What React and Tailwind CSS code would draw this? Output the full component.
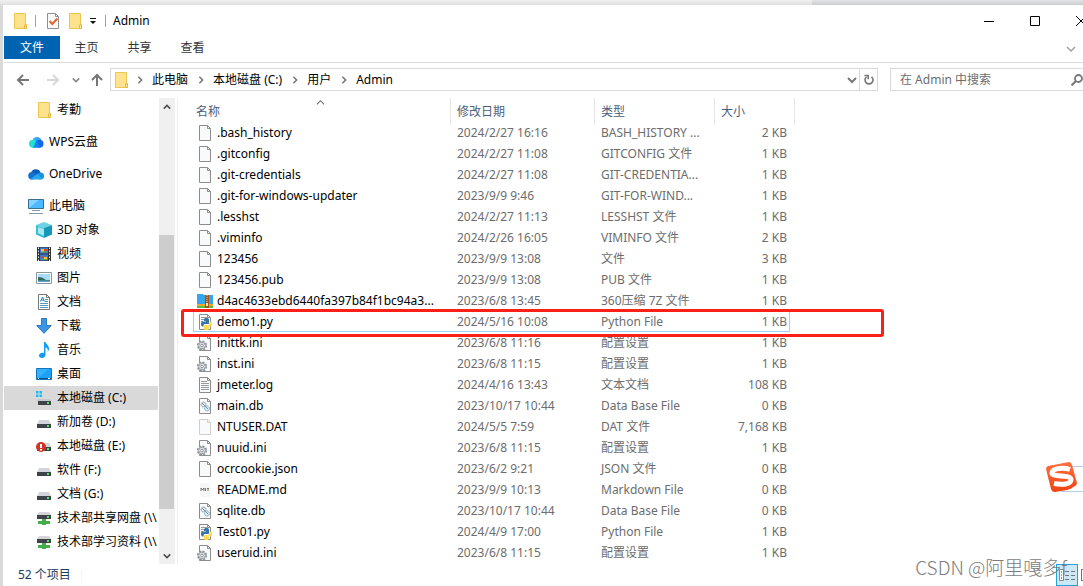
const files = [
  { name: '.bash_history', date: '2024/2/27 16:16', type: 'BASH_HISTORY ...', size: '2 KB', icon: 'blank' },
  { name: '.gitconfig', date: '2024/2/27 11:08', type: 'GITCONFIG 文件', size: '1 KB', icon: 'blank' },
  { name: '.git-credentials', date: '2024/2/27 11:08', type: 'GIT-CREDENTIA...', size: '1 KB', icon: 'blank' },
  { name: '.git-for-windows-updater', date: '2023/9/9 9:46', type: 'GIT-FOR-WIND...', size: '1 KB', icon: 'blank' },
  { name: '.lesshst', date: '2024/2/27 11:13', type: 'LESSHST 文件', size: '1 KB', icon: 'blank' },
  { name: '.viminfo', date: '2024/2/26 16:05', type: 'VIMINFO 文件', size: '2 KB', icon: 'blank' },
  { name: '123456', date: '2023/9/9 13:08', type: '文件', size: '3 KB', icon: 'blank' },
  { name: '123456.pub', date: '2023/9/9 13:08', type: 'PUB 文件', size: '1 KB', icon: 'blank' },
  { name: 'd4ac4633ebd6440fa397b84f1bc94a3...', date: '2023/6/8 13:45', type: '360压缩 7Z 文件', size: '1 KB', icon: 'zip' },
  { name: 'demo1.py', date: '2024/5/16 10:08', type: 'Python File', size: '1 KB', icon: 'python', selected: true },
  { name: 'inittk.ini', date: '2023/6/8 11:16', type: '配置设置', size: '1 KB', icon: 'ini' },
  { name: 'inst.ini', date: '2023/6/8 11:15', type: '配置设置', size: '1 KB', icon: 'ini' },
  { name: 'jmeter.log', date: '2024/4/16 13:43', type: '文本文档', size: '108 KB', icon: 'text' },
  { name: 'main.db', date: '2023/10/17 10:44', type: 'Data Base File', size: '0 KB', icon: 'db' },
  { name: 'NTUSER.DAT', date: '2024/5/5 7:59', type: 'DAT 文件', size: '7,168 KB', icon: 'faded' },
  { name: 'nuuid.ini', date: '2023/6/8 11:15', type: '配置设置', size: '1 KB', icon: 'ini' },
  { name: 'ocrcookie.json', date: '2023/6/2 9:21', type: 'JSON 文件', size: '0 KB', icon: 'blank' },
  { name: 'README.md', date: '2023/9/9 10:13', type: 'Markdown File', size: '0 KB', icon: 'md' },
  { name: 'sqlite.db', date: '2023/10/17 10:44', type: 'Data Base File', size: '0 KB', icon: 'db' },
  { name: 'Test01.py', date: '2024/4/9 17:00', type: 'Python File', size: '1 KB', icon: 'python' },
  { name: 'useruid.ini', date: '2023/6/8 11:15', type: '配置设置', size: '1 KB', icon: 'ini' },
]

const roots = [
  { label: 'WPS云盘', icon: WpsIcon },
  { label: 'OneDrive', icon: OneDriveIcon },
  { label: '此电脑', icon: PcIcon },
]

const children = [
  { label: '3D 对象', icon: CubeIcon },
  { label: '视频', icon: VideoIcon },
  { label: '图片', icon: PictureIcon },
  { label: '文档', icon: DocsIcon },
  { label: '下载', icon: DownloadIcon },
  { label: '音乐', icon: MusicIcon },
  { label: '桌面', icon: DesktopIcon },
  { label: '本地磁盘 (C:)', icon: SystemDriveIcon, active: true },
  { label: '新加卷 (D:)', icon: DriveIcon },
  { label: '本地磁盘 (E:)', icon: ErrorDriveIcon },
  { label: '软件 (F:)', icon: DriveIcon },
  { label: '文档 (G:)', icon: DriveIcon },
  { label: '技术部共享网盘 (\\\\', icon: NetDriveIcon },
  { label: '技术部学习资料 (\\\\', icon: NetDriveIcon },
]

const crumbs = ['此电脑', '本地磁盘 (C:)', '用户', 'Admin']

function Icon({ children }) {
  return (
    <svg width="16" height="16" viewBox="0 0 16 16" fill="none" className="shrink-0" aria-hidden="true">
      {children}
    </svg>
  )
}

function Chevron({ dir = 'down', color = '#6b6b6b', size = 8, stroke = 2 }) {
  const d = { down: 'M1 3l4 4 4-4', up: 'M1 7l4-4 4 4', right: 'M3 1l4 4-4 4' }[dir]
  return (
    <svg width={size} height={size} viewBox="0 0 10 10" fill="none" className="shrink-0" aria-hidden="true">
      <path d={d} stroke={color} strokeWidth={stroke} />
    </svg>
  )
}

function FolderIcon() {
  return (
    <Icon>
      <path d="M2.5.5h11v11h1v4h-12z" fill="#ffe28c" stroke="#ecc452" />
      <path d="M12.5 15.5v-3.5h2v3.5z" fill="#ffe9a8" stroke="#e5b93c" />
    </Icon>
  )
}

function PropsIcon() {
  return (
    <Icon>
      <path d="M2.5.5h8l3 3v12h-11z" fill="#f8f9fb" stroke="#8f8f8f" />
      <path d="M10.5.5v3h3" stroke="#8f8f8f" />
      <path d="M4.5 8l2.8 3 5-5.5" stroke="#e8632c" strokeWidth="2" />
    </Icon>
  )
}

function WpsIcon() {
  return (
    <Icon>
      <circle cx="9" cy="7.5" r="4.5" fill="#35a8f5" />
      <circle cx="5" cy="9.8" r="4" fill="#25dfd0" />
      <circle cx="11.5" cy="9.8" r="4" fill="#1268ef" />
      <path d="M5 13.8L9 6l3 7.8z" fill="#1583f0" />
    </Icon>
  )
}

function OneDriveIcon() {
  return (
    <Icon>
      <path d="M3 7a5 5 0 0 1 9.5-.6L13 10H2z" fill="#0a5cb8" />
      <circle cx="4" cy="9.8" r="3.8" fill="#1173cf" />
      <circle cx="12.5" cy="10" r="3.5" fill="#1a8fe0" />
      <path d="M2 13.4L9.5 7.6l5 5.2-2 .8H4z" fill="#29a5ea" />
    </Icon>
  )
}

function PcIcon() {
  return (
    <Icon>
      <path d="M.5 1.5h15v9H.5z" fill="#4bb8ff" stroke="#37718f" />
      <path d="M1 10V2h10z" fill="#86d1ff" />
      <path d="M4 12.5h8M1 15.5h14" stroke="#8797a3" />
    </Icon>
  )
}

function CubeIcon() {
  return (
    <Icon>
      <path d="M0 3l8-3 8 3-8 3z" fill="#6cd3e2" />
      <path d="M0 3l8 3v10l-8-3.5z" fill="#35bed4" />
      <path d="M16 3L8 6v10l8-3.5z" fill="#1597ba" />
      <path d="M2 5l6 2v7l-6-3z" fill="#a8e8f0" />
    </Icon>
  )
}

function VideoIcon() {
  return (
    <Icon>
      <path d="M1 1h14v14H1z" fill="#333" />
      <path d="M4 1.5h8v6H4z" fill="#3977d5" />
      <path d="M4 8.5h8v6H4z" fill="#3977d5" />
      <path d="M5 3h3v3H5zM8 11h3v2H8z" fill="#f1c334" />
      <path d="M8 3h3v2H8zM5 10h2v2H5z" fill="#cf4730" />
      <path d="M5 6h6M5 13.5h6" stroke="#63a547" />
      <path d="M2.5 1.5v14M13.5 1.5v14" stroke="#eee" strokeDasharray="1.5 1.5" />
    </Icon>
  )
}

function PictureIcon() {
  return (
    <Icon>
      <path d="M.5 2.5h15v11H.5z" fill="#fff" stroke="#8c969c" />
      <path d="M2 4h12v8H2z" fill="#a9dcf8" />
      <path d="M2 7l4 .5 4 2.5h4v2H2z" fill="#2e6b58" />
      <path d="M2 10.5h12V12H2z" fill="#5da3cc" />
    </Icon>
  )
}

function DocsIcon() {
  return (
    <Icon>
      <path d="M2.5.5h8l3 3v12h-11z" fill="#fff" stroke="#777" />
      <path d="M10.5.5v3h3" stroke="#777" />
      <path d="M4.5 7.5L6.5 3l2 4.5M5.2 6h2.6" stroke="#1e7fc4" />
      <path d="M9 5.5h3M9 7.5h3M4 9.5h8M4 11.5h8M4 13.5h8" stroke="#5796b9" />
    </Icon>
  )
}

function DownloadIcon() {
  return (
    <Icon>
      <path d="M5.5.5h5v7h4.8L8 15.3.7 7.5h4.8z" fill="#3d94e3" stroke="#2878c4" />
    </Icon>
  )
}

function MusicIcon() {
  return (
    <Icon>
      <path d="M8 0h1.5c.3 2 3.5 3.4 3.5 6.5 0 1.5-.6 2.5-1.3 3.3.4-2.5-.4-3.8-2.2-4.5V13c0 1.6-1.6 3-3.5 3S3 15 3 13.5s1.5-2.8 3.5-2.8c.6 0 1.1.1 1.5.3z" fill="#159bf3" />
    </Icon>
  )
}

function DesktopIcon() {
  return (
    <Icon>
      <path d="M.5 2.5h15v11H.5z" fill="#1ba1f8" stroke="#1577bb" />
      <path d="M1 13V3h12z" fill="#35b0ff" />
      <path d="M1 12.5h14" stroke="#0d4f87" />
      <path d="M2 12.5h1M12 12.5h2" stroke="#fff" />
    </Icon>
  )
}

function DriveShape({ y = 0 }) {
  return (
    <>
      <path d={`M3 ${5 + y}h10l2 4H1z`} fill="#d3d5d8" />
      <path d={`M1 ${9 + y}h14v4H1z`} fill="#3e4347" />
      <path d={`M11 ${11 + y}h2`} stroke="#52e35c" strokeWidth="2" />
    </>
  )
}

function DriveIcon() {
  return <Icon><DriveShape y={1} /></Icon>
}

function SystemDriveIcon() {
  return (
    <Icon>
      <path d="M2 9h12l1 3H1z" fill="#c5c8ca" />
      <path d="M2 11h13v4H2z" fill="#3e4347" />
      <path d="M11 13h2" stroke="#52e35c" strokeWidth="2" />
      <path d="M0 1h2.5v2.500H0zM3.500 1H6v2.500H3.500zM0 4.500h2.500V7H0zM3.500 4.500H6V7H3.500z" fill="#18bdf0" />
    </Icon>
  )
}

function ErrorDriveIcon() {
  return (
    <Icon>
      <DriveShape />
      <circle cx="5" cy="9" r="5" fill="#cf3526" />
      <path d="M5 6v4M5 11v1.5" stroke="#fff" strokeWidth="2" />
    </Icon>
  )
}

function NetDriveIcon() {
  return (
    <Icon>
      <path d="M3 2h10l2 3H1z" fill="#d3d5d8" />
      <path d="M1 5h14v4H1z" fill="#3e4347" />
      <path d="M11 7h2" stroke="#52e35c" strokeWidth="2" />
      <path d="M6 9h4v2h4v3h-4v1H6v-1H2v-3h4z" fill="#43ae4a" />
    </Icon>
  )
}

function Page({ stroke = '#8d8d8d', fill = '#f9fafb' }) {
  return (
    <>
      <path d="M2.5.5h8l3 3v12h-11z" fill={fill} stroke={stroke} />
      <path d="M10.5.5v3h3" stroke={stroke} />
    </>
  )
}

function FileIcon({ kind }) {
  if (kind === 'zip') {
    return (
      <Icon>
        <path d="M0 1h6l1 1h9v13H0z" fill="#36a6ee" />
        <path d="M0 11h16v2H0z" fill="#f2a52b" />
        <path d="M0 13h16v2H0z" fill="#58b947" />
        <path d="M8 2h4v13H8z" fill="#a6521c" />
        <path d="M10 2v8" stroke="#f6d27a" strokeDasharray="1 1" />
        <path d="M9 10h2v3H9z" fill="#ffe79b" />
      </Icon>
    )
  }
  if (kind === 'md') {
    return (
      <Icon>
        <path d="M3 1h8l3 3v11H3z" fill="#f6f6f6" />
        <path d="M4 9V6l1.500 2L7 6v3M8.500 6v3M10 6.500h2M11 6v3" stroke="#777" />
      </Icon>
    )
  }
  return (
    <Icon>
      <Page stroke={kind === 'faded' ? '#cfcfcf' : '#8d8d8d'} />
      {kind === 'text' && <path d="M4 4.500h6M4 6.500h8M4 8.500h8M4 10.500h8M4 12.500h8" stroke="#999" />}
      {kind === 'ini' && (
        <>
          <circle cx="5" cy="10.5" r="4.3" stroke="#8b9298" strokeWidth="1.6" strokeDasharray="2 1.37" fill="#d5d9dc" />
          <circle cx="5" cy="10.5" r="3.3" fill="#dfe3e5" stroke="#9aa1a6" />
          <circle cx="5" cy="10.5" r="1.3" fill="#fff" stroke="#8b9298" />
        </>
      )}
      {kind === 'db' && (
        <>
          <circle cx="6.5" cy="6.5" r="2.500" fill="#dfe7ec" stroke="#7d929f" strokeDasharray="1.5 .7" />
          <circle cx="10" cy="10.5" r="2.500" fill="#d4ebf7" stroke="#6ba4c5" strokeDasharray="1.5 .7" />
          <path d="M5 5l6 6" stroke="#7d929f" />
        </>
      )}
      {kind === 'python' && (
        <>
          <path d="M4 3.500h6M4 5.500h3M4 7.500h2M4 9.500h1" stroke="#999" />
          <path d="M7 5.500C7 4.500 8 4 9.500 4S12 4.500 12 5.500V9c0 .8-.5 1-1 1H8c-1 0-1.500.6-1.500 1.500v1H5.500C4.500 12.500 4 11.500 4 10s.5-2.500 1.500-2.500H9V7H7z" fill="#3775a9" />
          <path d="M12.500 7.500h1c1 0 1.500 1 1.500 2.500s-.5 2.500-1.500 2.500H10v.5h2v1.500c0 1-1 1.500-2.500 1.500S7 15.500 7 14.500V12c0-.8.5-1 1-1h3c1 0 1.500-.6 1.500-1.500z" fill="#ffdb4d" />
        </>
      )}
    </Icon>
  )
}

function NavArrow({ label, d, color }) {
  return (
    <button aria-label={label}>
      <svg width="14" height="14" viewBox="0 0 14 14" fill="none" aria-hidden="true">
        <path d={d} stroke={color} strokeWidth="2" />
      </svg>
    </button>
  )
}

function TitleBar() {
  return (
    <header className="flex h-[31px] items-center pl-2">
      <FolderIcon />
      <div className="ml-[7px] mr-[9px] h-3 w-px bg-gray-400" />
      <button aria-label="属性"><PropsIcon /></button>
      <button aria-label="新建文件夹" className="ml-[6px]"><FolderIcon /></button>
      <button aria-label="自定义快速访问工具栏" className="ml-[6px]">
        <svg width="8" height="8" viewBox="0 0 8 8" aria-hidden="true">
          <path d="M1 1h6v1H1zM1 4h6L4 7z" fill="#111" />
        </svg>
      </button>
      <div className="ml-2 mr-[7px] h-3 w-px bg-gray-400" />
      <h1>Admin</h1>
      <div className="ml-auto flex h-full">
        <button aria-label="最小化" className="flex w-[46px] items-center justify-center">
          <svg width="10" height="10"><path d="M0 5h10v1H0z" /></svg>
        </button>
        <button aria-label="最大化" className="flex w-[46px] items-center justify-center">
          <svg width="10" height="10" fill="none"><path d="M.5.5h9v9h-9z" stroke="#000" /></svg>
        </button>
        <button aria-label="关闭" className="flex w-[46px] items-center justify-center">
          <svg width="10" height="10" fill="none"><path d="M0 0l10 10M10 0L0 10" stroke="#000" /></svg>
        </button>
      </div>
    </header>
  )
}

function Ribbon() {
  return (
    <nav className="flex h-[27px] border-b border-[#dadbdc] pr-[28px] text-[#333]">
      <button className="h-[23px] w-14 bg-[#0063b1] text-white">文件</button>
      <button className="h-[23px] w-[53px]">主页</button>
      <button className="h-[23px] w-[53px]">共享</button>
      <button className="h-[23px] w-[53px]">查看</button>
      <button aria-label="展开功能区" className="ml-auto">
        <Chevron color="#a0a0a0" size={10} stroke={1.5} />
      </button>
    </nav>
  )
}

function AddressRow() {
  return (
    <div className="flex h-[35px] items-start pt-[5px]">
      <div className="flex h-[23px] w-[106px] items-center pl-3">
        <NavArrow label="后退" d="M7 2L2 7l5 5M2 7h11" color="#777" />
        <span className="ml-4 flex"><NavArrow label="前进" d="M7 2l5 5-5 5M12 7H1" color="#d8d8d8" /></span>
        <button aria-label="最近位置" className="ml-3"><Chevron color="#888" /></button>
        <span className="ml-[10px] flex"><NavArrow label="向上" d="M2 7l5-5 5 5M7 2v11" color="#777" /></span>
      </div>
      <div className="flex h-[23px] flex-1 items-center border border-[#d9d9d9] pl-[2px]">
        <FolderIcon />
        <ol className="flex items-center gap-[2px]">
          {crumbs.map((c) => (
            <li key={c} className="flex items-center">
              <span className="ml-[7px] mr-[8px] flex"><Chevron dir="right" color="#777" /></span>
              <a href="#">{c}</a>
            </li>
          ))}
        </ol>
        <button aria-label="以前的位置" className="ml-auto mr-[2px]"><Chevron size={10} color="#777" /></button>
        <button aria-label="刷新" className="flex h-full w-[18px] items-center justify-center border-l border-[#d9d9d9]">
          <svg width="12" height="12" viewBox="0 0 12 12" fill="none" aria-hidden="true">
            <path d="M8.500 2.800a4 4 0 1 1-5 0" stroke="#777" strokeWidth="1.600" />
            <path d="M1.500 1.500h3.700v3.700" stroke="#777" strokeWidth="1.600" />
          </svg>
        </button>
      </div>
      <div className="ml-3 flex h-[23px] w-[214px] items-center border border-[#d9d9d9] pl-[9px]">
        <input
          type="search"
          aria-label="在 Admin 中搜索"
          placeholder="在 Admin 中搜索"
          className="w-[171px] outline-none placeholder:text-[#6d6d6d]"
        />
        <svg width="12" height="12" viewBox="0 0 12 12" fill="none" className="shrink-0" aria-hidden="true">
          <circle cx="7.5" cy="4.5" r="3.5" stroke="#777" strokeWidth="1.800" />
          <path d="M5 7l-4.500 4.500" stroke="#777" strokeWidth="2" />
        </svg>
      </div>
    </div>
  )
}

function TreeItem({ icon: ItemIcon, label, active, deep }) {
  return (
    <li className={`${active ? 'bg-[#d9d9d9]' : ''} ${deep ? 'pl-8' : 'pl-6'}`}>
      <a href="#" className="flex h-6 items-center gap-[5px] overflow-hidden whitespace-nowrap">
        <ItemIcon />
        {label}
      </a>
    </li>
  )
}

function Sidebar() {
  return (
    <aside className="flex w-[171px] shrink-0">
      <div className="w-[154px] overflow-hidden">
        <ul>
          <TreeItem icon={FolderIcon} label="考勤" deep />
        </ul>
        <ul className="mt-2 flex flex-col gap-2">
          {roots.map((r) => <TreeItem key={r.label} {...r} />)}
        </ul>
        <ul>
          {children.map((c) => <TreeItem key={c.label} {...c} deep />)}
        </ul>
      </div>
      <div className="ml-px flex w-4 flex-col items-center bg-[#f0f0f0]">
        <button aria-label="向上滚动" className="flex h-[17px] items-center"><Chevron dir="up" color="#505050" /></button>
        <div className="mt-[120px] h-[274px] w-[15px] self-start bg-[#cdcdcd]" />
        <button aria-label="向下滚动" className="mt-auto flex h-[17px] items-center"><Chevron color="#505050" /></button>
      </div>
    </aside>
  )
}

function HeadCell({ children, first, last }) {
  // the header hangs 3px over the first row of the scrolled list
  return (
    <th scope="col" className="relative p-0 text-left font-normal">
      <div className={`relative z-10 -mb-[3px] h-[27px] border-r border-[#e5e5e5] bg-white pt-[6px] ${first ? 'pl-[3px]' : 'pl-[6px]'} ${last ? '-mr-[5px]' : ''}`}>
        {children}
        {first && <span className="absolute left-[123px] top-0"><Chevron dir="up" size={9} stroke={1.2} /></span>}
      </div>
    </th>
  )
}

function FileTable() {
  return (
    <main className="ml-[2px] flex-1 border-l border-[#eee] pl-[15px]">
      <table className="w-[597px] table-fixed border-collapse whitespace-nowrap">
        <colgroup>
          <col className="w-[258px]" />
          <col className="w-[144px]" />
          <col className="w-[120px]" />
          <col className="w-[75px]" />
        </colgroup>
        <thead>
          <tr className="h-6 text-[#4c607a]">
            <HeadCell first>名称</HeadCell>
            <HeadCell>修改日期</HeadCell>
            <HeadCell>类型</HeadCell>
            <HeadCell last>大小</HeadCell>
          </tr>
        </thead>
        <tbody>
          {files.map((f) => (
            <tr
              key={f.name}
              className={`h-[21px] text-[#6d6d6d] ${f.selected ? 'relative' : ''}`}
            >
              <td className="p-0 pl-1 text-black">
                <div className="flex items-center gap-1">
                  <FileIcon kind={f.icon} />
                  {f.name}
                </div>
                {f.selected && (
                  <>
                    <span className="absolute inset-0 border border-[#99d1ff]" />
                    <span className="absolute -left-[12px] -top-[2px] h-[28px] w-[703px] rounded-[3px] border-3 border-[#fb2016]" />
                  </>
                )}
              </td>
              <td className="p-0 pl-[6px]">{f.date}</td>
              <td className="p-0 pl-[6px]">{f.type}</td>
              <td className="p-0 pr-[3px] text-right">{f.size}</td>
            </tr>
          ))}
        </tbody>
      </table>
    </main>
  )
}

function StatusBar() {
  return (
    <footer className="flex h-[22px] shrink-0 items-center pl-[14px] text-[#1e395b]">
      <span className="pr-[10px]">52 个项目</span>
      <div className="h-3 w-px bg-gray-100" />
      <button aria-label="详细信息" className="ml-auto mr-[3px] flex h-[22px] w-[22px] items-center justify-center border border-[#26a0da] bg-[#cce8f6]">
        <svg width="16" height="12" viewBox="0 0 16 12" fill="none" className="shrink-0" aria-hidden="true">
          <path d="M.5.5h4v11h-4z" fill="#fff" stroke="#888" />
          <path d="M2 3h1M2 6h1" stroke="#4a90c0" strokeWidth="1.5" />
          <path d="M2 9h1" stroke="#c0392b" strokeWidth="1.5" />
          <path d="M6 2.5h4M12 2.5h4M6 6.500h4M12 6.500h4M6 10.500h4M12 10.500h4" stroke="#777" />
        </svg>
      </button>
      <button aria-label="大图标" className="mr-[6px] h-3 w-[17px] border border-gray-500" />
    </footer>
  )
}

function SogouBadge() {
  return (
    <div className="absolute right-0 top-[460px] h-[34px] w-[38px]">
      <div className="ml-4 mt-[6px] h-[26px] border-y border-[#b5cde6]" />
      <svg width="34" height="34" viewBox="0 0 34 34" fill="none" className="absolute left-0 top-0" aria-hidden="true">
        <defs>
          <linearGradient id="sogou" x1="0" y1="0" x2="0" y2="1">
            <stop offset="0" stopColor="#ff7140" />
            <stop offset="1" stopColor="#ee4410" />
          </linearGradient>
        </defs>
        <path d="M3 6L24 2q2 0 3 3l5 18q0 2-2 3-4 3-8 4l-12 2q-3 0-4-3L1 9q0-2 2-3z" fill="url(#sogou)" />
        <path d="M25 9.500c-6-2-17-1.500-18 3-1 5.500 19 1.500 19 7 0 5-9 5.500-17 4" stroke="#fff" strokeWidth="5" />
      </svg>
    </div>
  )
}

export default function App() {
  return (
    <div className="relative flex h-screen flex-col overflow-hidden bg-[#d9d9d9] pl-[3px] font-['Noto_Sans','Noto_Sans_CJK_SC',sans-serif] text-xs text-black">
      <div className="-ml-[3px] flex h-[5px] shrink-0">
        <div className="w-3/4 bg-gradient-to-b from-[#f2f2f2] to-[#dedede]" />
        <div className="flex-1 bg-gradient-to-b from-[#e2e4e7] to-[#cbcdd0]" />
      </div>
      <div className="-mr-[21px] flex min-h-0 flex-1 flex-col bg-white pl-px">
        <TitleBar />
        <Ribbon />
        <AddressRow />
        <div className="flex min-h-0 flex-1">
          <Sidebar />
          <FileTable />
        </div>
        <StatusBar />
      </div>
      <SogouBadge />
      <p className="absolute bottom-[5px] right-4 font-['Noto_Sans_CJK_SC',sans-serif] text-[19px] leading-7 font-light text-[#7d7d7d]">
        CSDN @阿里嘎多f
      </p>
    </div>
  )
}
